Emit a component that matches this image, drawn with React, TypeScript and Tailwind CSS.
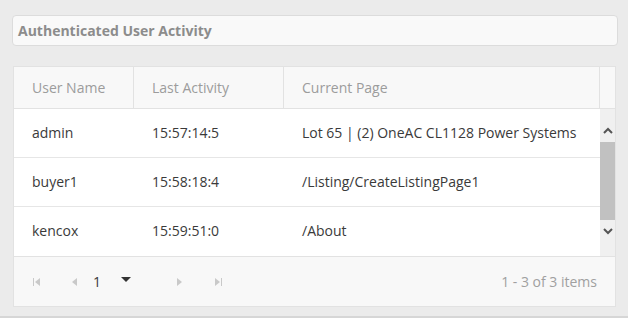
import React from "react";

const rows = [
  { user: "admin", time: "15:57:14:5", page: "Lot 65 | (2) OneAC CL1128 Power Systems" },
  { user: "buyer1", time: "15:58:18:4", page: "/Listing/CreateListingPage1" },
  { user: "kencox", time: "15:59:51:0", page: "/About" },
];

const Tri = ({ dir }: { dir: "left" | "right" }) => (
  <svg width="5" height="8" viewBox="0 0 5 8" className="fill-[#c9c9c9]">
    {dir === "left" ? <path d="M5 0v8L0 4z" /> : <path d="M0 0v8l5-4z" />}
  </svg>
);

export default function App() {
  return (
    <div className="w-[628px] h-[318px] bg-[#ebebeb] font-['Open_Sans',sans-serif] pt-[15px] border-b-2 border-[#d6d6d6] box-border">
      <div className="ml-[12px] w-[606px] h-[31px] rounded-[4px] border border-[#dcdcdc] bg-[#f9f9f9] flex items-center px-[5px]">
        <span className="text-[14px] font-bold text-[#8c8c8c]">Authenticated User Activity</span>
      </div>

      <div className="ml-[13px] mt-[20px] w-[603px] border border-[#e2e2e2] bg-[#f8f8f8]">
        <div className="flex h-[42px] text-[14px] text-[#9c9c9c] border-b border-[#e2e2e2]">
          <div className="w-[120px] border-r border-[#e2e2e2] flex items-center pl-[18px]">User Name</div>
          <div className="w-[150px] border-r border-[#e2e2e2] flex items-center pl-[18px]">Last Activity</div>
          <div className="w-[316px] border-r border-[#e2e2e2] flex items-center pl-[18px]">Current Page</div>
          <div className="flex-1" />
        </div>

        <div className="flex bg-white">
          <div className="w-[586px]">
            {rows.map((r, i) => (
              <div
                key={r.user}
                className={`flex h-[49px] items-center pb-[2px] text-[14px] text-[#3a3a3a] ${i < rows.length - 1 ? "border-b border-[#e6e6e6]" : ""}`}
              >
                <div className="w-[120px] pl-[18px]">{r.user}</div>
                <div className="w-[150px] pl-[18px]">{r.time}</div>
                <div className="flex-1 pl-[18px] whitespace-nowrap">{r.page}</div>
              </div>
            ))}
          </div>
          <div className="flex-1 bg-[#f0f0f0] flex flex-col items-center">
            <svg width="10" height="7" viewBox="0 0 10 7" className="mt-[18px] mb-[8px]">
              <path d="M1 6l4-4 4 4" stroke="#555" strokeWidth="2" fill="none" />
            </svg>
            <div className="w-[15px] h-[78px] bg-[#c1c1c1]" />
            <svg width="10" height="7" viewBox="0 0 10 7" className="mt-[8px]">
              <path d="M1 1l4 4 4-4" stroke="#555" strokeWidth="2" fill="none" />
            </svg>
          </div>
        </div>

        <div className="flex h-[50px] items-center border-t border-[#e2e2e2] text-[14px]">
          <div className="flex items-center ml-[19px]">
            <div className="flex items-center gap-[1px]">
              <div className="w-[1px] h-[8px] bg-[#c9c9c9]" />
              <Tri dir="left" />
            </div>
            <div className="ml-[32px]">
              <Tri dir="left" />
            </div>
            <span className="ml-[16px] text-[#3a3a3a]">1</span>
            <svg width="10" height="6" viewBox="0 0 10 6" className="ml-[20px] mb-[4px]">
              <path d="M0 0h10L5 5z" fill="#333" />
            </svg>
            <div className="ml-[46px]">
              <Tri dir="right" />
            </div>
            <div className="ml-[33px] flex items-center gap-[1px]">
              <Tri dir="right" />
              <div className="w-[1px] h-[8px] bg-[#c9c9c9]" />
            </div>
          </div>
          <span className="ml-auto mr-[18px] text-[#a0a0a0]">1 - 3 of 3 items</span>
        </div>
      </div>
    </div>
  );
}
